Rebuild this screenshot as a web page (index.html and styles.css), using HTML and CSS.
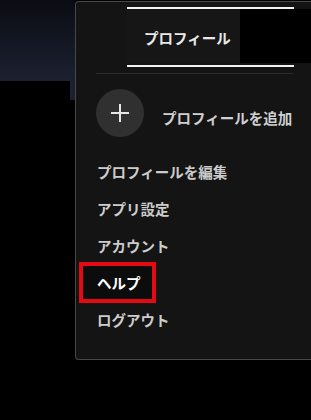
FILE: index.html
```html
<!DOCTYPE html>
<html lang="ja">
<head>
<meta charset="utf-8">
<link rel="stylesheet" href="styles.css">
</head>
<body>
  <div class="backdrop">
    <div class="backdrop-top"></div>
    <div class="backdrop-strip"></div>
  </div>

  <nav class="menu">
    <div class="profiles">
      <div class="profile-tab">プロフィール</div>
      <div class="profile-next"></div>
    </div>
    <div class="divider"></div>

    <div class="add-row">
      <div class="add-circle">
        <svg width="20" height="20" viewBox="0 0 20 20">
          <path d="M10 1V19M1 10H19" stroke="#e6e6e6" stroke-width="2" fill="none"/>
        </svg>
      </div>
      <span class="add-label">プロフィールを追加</span>
    </div>

    <ul class="items">
      <li class="item">プロフィールを編集</li>
      <li class="item">アプリ設定</li>
      <li class="item">アカウント</li>
      <li class="item"><span class="focus">ヘルプ</span></li>
      <li class="item">ログアウト</li>
    </ul>
  </nav>
</body>
</html>
```

FILE: styles.css
```css
html, body {
  margin: 0;
  padding: 0;
  background: #000;
  width: 311px;
  height: 420px;
  overflow: hidden;
  font-family: "Noto Sans CJK JP", "Noto Sans", sans-serif;
}

.backdrop {
  display: flex;
  flex-direction: column;
  width: 75px;
}

.backdrop-top {
  height: 81px;
  background: linear-gradient(to bottom, #0a0c12 0%, #141824 55%, #1c2030 100%);
}

.backdrop-strip {
  align-self: flex-end;
  width: 5px;
  height: 19px;
  background: #1c2030;
}

.menu {
  position: absolute;
  left: 75px;
  top: 1px;
  width: 235px;
  height: 357px;
  background: #141414;
  border: 1px solid #474747;
  border-right: none;
  border-radius: 4px 0 0 4px;
  overflow: hidden;
  display: flex;
  flex-direction: column;
}

.profiles {
  display: flex;
  margin: 5px 0 0 51px;
  width: 167px;
  height: 54px;
  border-top: 2px solid #f2f2f2;
  border-bottom: 2px solid #f2f2f2;
  padding-bottom: 2px;
  flex-shrink: 0;
}

.profile-tab {
  width: 113px;
  flex-shrink: 0;
  box-sizing: border-box;
  padding: 2px 0 0 17px;
  display: flex;
  align-items: center;
  background: #161616;
  color: #e8e8e8;
  font-size: 14.5px;
  font-weight: 700;
  white-space: nowrap;
}

.profile-next {
  width: 71px;
  flex-shrink: 0;
  background: #000;
}

.divider {
  margin: 6px 0 0 20px;
  width: 197px;
  height: 1px;
  background: #2c2c2c;
  flex-shrink: 0;
}

.add-row {
  display: flex;
  align-items: center;
  margin: 15px 0 0 20px;
  gap: 18px;
}

.add-circle {
  width: 48px;
  height: 48px;
  border-radius: 50%;
  background: #303030;
  display: flex;
  align-items: center;
  justify-content: center;
}

.add-label {
  padding-top: 9px;
  color: #cfcfcf;
  font-size: 14.5px;
  font-weight: 700;
  white-space: nowrap;
}

.items {
  list-style: none;
  margin: 16px 0 0;
  padding: 0;
}

.item {
  height: 37px;
  display: flex;
  align-items: center;
  padding-left: 21px;
  color: #cccccc;
  font-size: 14.5px;
  font-weight: 700;
  white-space: nowrap;
}

.focus {
  display: flex;
  align-items: center;
  height: 33px;
  margin-left: -18px;
  padding: 0 11px 0 14px;
  border: 4px solid #e50914;
  background: #0c0c0c;
  color: #ffffff;
}
```
